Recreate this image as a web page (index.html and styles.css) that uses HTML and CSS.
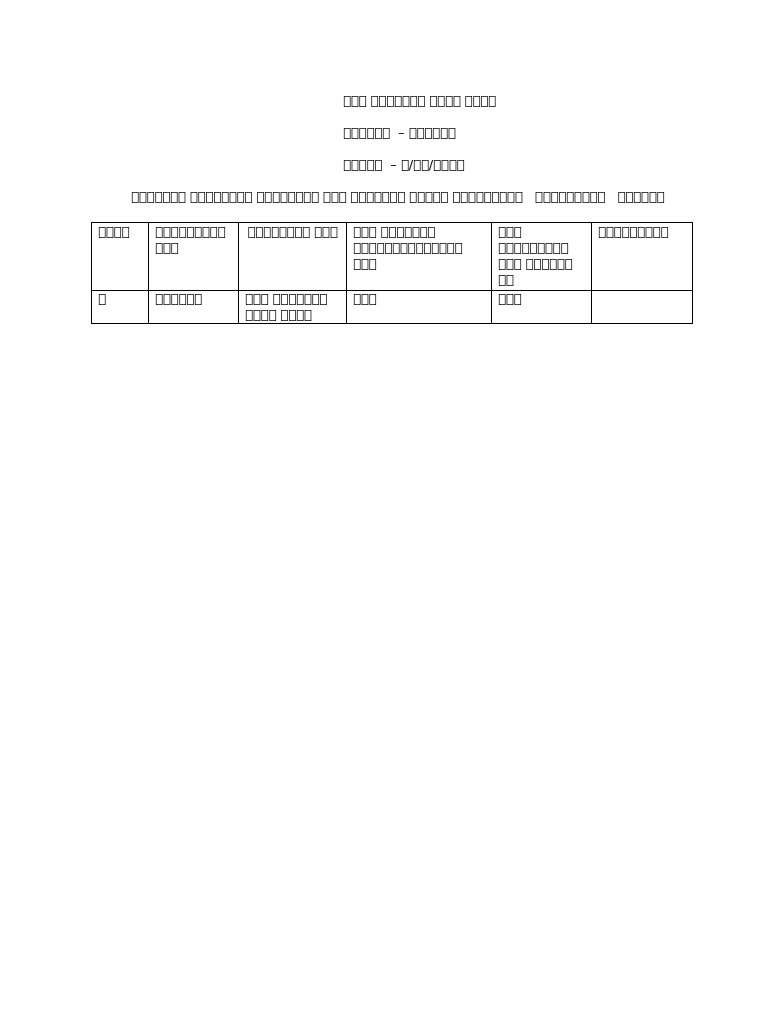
FILE: index.html
```html
<!DOCTYPE html>
<html>
<head>
<meta charset="utf-8">
<title>&#xE001;&#xE002;&#xE003;</title>
<link rel="stylesheet" href="styles.css">
</head>
<body>
<div class="doc">
  <div class="heading">
    <p class="line">&#xE001;&#xE002;&#xE003; &#xE004;&#xE005;&#xE006;&#xE007;&#xE008;&#xE009;&#xE00A; &#xE00B;&#xE00C;&#xE00D;&#xE00E; &#xE00F;&#xE010;&#xE011;&#xE012;</p>
    <p class="line">&#xE013;&#xE014;&#xE015;&#xE016;&#xE017;&#xE018;  – &#xE019;&#xE01A;&#xE01B;&#xE01C;&#xE01D;&#xE01E;</p>
    <p class="line">&#xE020;&#xE021;&#xE022;&#xE023;&#xE024;  – &#xE035;/&#xE031;&#xE032;/&#xE032;&#xE030;&#xE031;&#xE039;</p>
  </div>
  <p class="line title">&#xE040;&#xE041;&#xE042;&#xE043;&#xE044;&#xE045;&#xE03F; &#xE046;&#xE047;&#xE048;&#xE049;&#xE04A;&#xE04B;&#xE04C;&#xE04D; &#xE04E;&#xE04F;&#xE050;&#xE051;&#xE052;&#xE053;&#xE054;&#xE055; &#xE056;&#xE057;&#xE058; &#xE059;&#xE05A;&#xE05B;&#xE05C;&#xE05D;&#xE05E;&#xE05F; &#xE060;&#xE061;&#xE062;&#xE063;&#xE064; &#xE065;&#xE066;&#xE067;&#xE068;&#xE069;&#xE06A;&#xE06B;&#xE07B;&#xE07C;   &#xE06C;&#xE06D;&#xE06E;&#xE06F;&#xE070;&#xE071;&#xE072;&#xE073;&#xE074;   &#xE075;&#xE076;&#xE077;&#xE078;&#xE079;&#xE07A;</p>
  <table class="grid">
    <colgroup>
      <col class="c1"><col class="c2"><col class="c3"><col class="c4"><col class="c5"><col class="c6">
    </colgroup>
    <tr class="head">
      <td>&#xE080;&#xE081;&#xE082;&#xE083;</td>
      <td>&#xE084;&#xE085;&#xE086;&#xE087;&#xE088;&#xE089;&#xE08A;&#xE08B;&#xE08C; &#xE08D;&#xE08E;&#xE08F;</td>
      <td class="center">&#xE090;&#xE091;&#xE092;&#xE093;&#xE094;&#xE095;&#xE096;&#xE09A; &#xE097;&#xE098;&#xE099;</td>
      <td>&#xE0A0;&#xE0A1;&#xE0A2; &#xE0A3;&#xE0A4;&#xE0A5;&#xE0A6;&#xE0A7;&#xE0A8;&#xE0A9; &#xE0AA;&#xE0AB;&#xE0AC;&#xE0AD;&#xE0AE;&#xE0AF;&#xE0B0;&#xE0B1;&#xE0B2;&#xE0B3;&#xE0B4;&#xE0B5;&#xE0B6;&#xE0BA; &#xE0B7;&#xE0B8;&#xE0B9;</td>
      <td>&#xE0A0;&#xE0A1;&#xE0A2; &#xE0C0;&#xE0C1;&#xE0C2;&#xE0C3;&#xE0C4;&#xE0C5;&#xE0C6;&#xE0C7;&#xE0DB; &#xE0C8;&#xE0C9;&#xE0CA; &#xE0CB;&#xE0CC;&#xE0CD;&#xE0CE;&#xE0CF;&#xE0DC; &#xE0D0;&#xE0D1;</td>
      <td>&#xE0D2;&#xE0D3;&#xE0D4;&#xE0D5;&#xE0D6;&#xE0D7;&#xE0D8;&#xE0D9;&#xE0DA;</td>
    </tr>
    <tr class="row">
      <td>&#xE031;</td>
      <td>&#xE0E0;&#xE0E1;&#xE0E2;&#xE0E3;&#xE0E4;&#xE0E5;</td>
      <td>&#xE0E7;&#xE0E8;&#xE0E9; &#xE0EA;&#xE0EB;&#xE0EC;&#xE0ED;&#xE0EE;&#xE0EF;&#xE0F0; &#xE0F1;&#xE0F2;&#xE0F3;&#xE0F4; &#xE0F5;&#xE0F6;&#xE0F7;&#xE0F8;</td>
      <td>&#xE031;&#xE032;&#xE030;</td>
      <td>&#xE031;&#xE031;&#xE030;</td>
      <td></td>
    </tr>
  </table>
</div>
</body>
</html>
```
FILE: styles.css
```css
html, body {
  margin: 0;
  padding: 0;
  background: #ffffff;
}
body {
  font-family: "DejaVu Sans", sans-serif;
  font-size: 13px;
  color: #000000;
}
.doc {
  width: 601px;
  padding: 93px 0 0 91px;
  filter: grayscale(1);
}
.heading {
  padding-left: 252px;
}
.line {
  margin: 0 0 16px 0;
  line-height: 16px;
  white-space: pre-wrap;
}
.title {
  padding-left: 40px;
  margin-bottom: 17px;
}
.grid {
  border-collapse: collapse;
  table-layout: fixed;
  width: 602px;
}
.c1 { width: 57px; }
.c2 { width: 90px; }
.c3 { width: 108px; }
.c4 { width: 145px; }
.c5 { width: 100px; }
.c6 { width: 101px; }
.grid td {
  border: 1px solid #000000;
  vertical-align: top;
  padding: 1px 6px 1px 6px;
  line-height: 16px;
}
.grid td.center {
  text-align: center;
}
.head td {
  height: 65px;
}
.row td {
  height: 32px;
  padding-top: 0;
  padding-bottom: 0;
}
```
